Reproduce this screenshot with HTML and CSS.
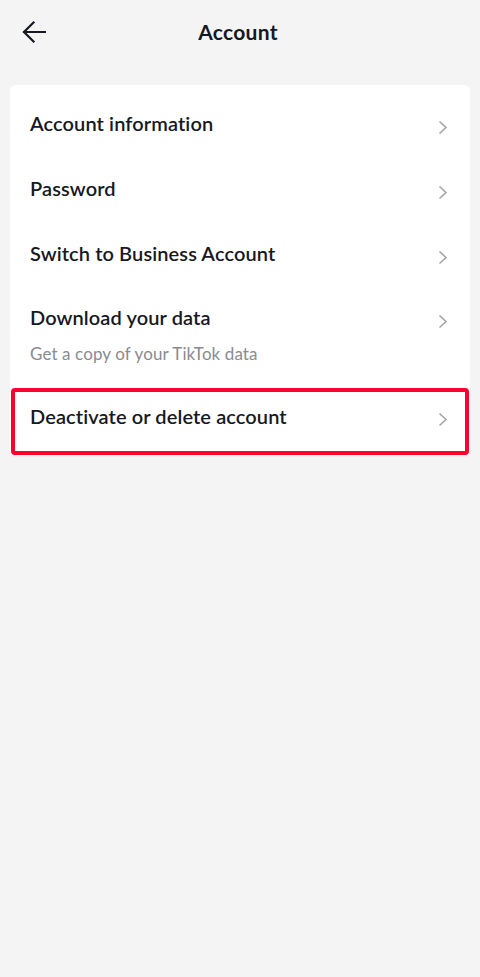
FILE: index.html
```html
<!DOCTYPE html>
<html>
<head>
<meta charset="utf-8">
<link rel="stylesheet" href="styles.css">
</head>
<body>
<header class="topbar">
  <svg class="back" width="24" height="24" viewBox="0 0 24 24"><path d="M23 12H2M11.5 2.5L2 12l9.5 9.5" fill="none" stroke="#161823" stroke-width="2.2" stroke-linecap="square"/></svg>
  <h1 class="title">Account</h1>
</header>
<main class="card">
  <div class="row">
    <span class="label">Account information</span>
    <svg class="chev" width="10" height="15" viewBox="0 0 10 15"><path d="M1.5 1.5L8 7.5l-6.5 6" fill="none" stroke="#a3a3a8" stroke-width="1.6"/></svg>
  </div>
  <div class="row">
    <span class="label">Password</span>
    <svg class="chev" width="10" height="15" viewBox="0 0 10 15"><path d="M1.5 1.5L8 7.5l-6.5 6" fill="none" stroke="#a3a3a8" stroke-width="1.6"/></svg>
  </div>
  <div class="row">
    <span class="label">Switch to Business Account</span>
    <svg class="chev" width="10" height="15" viewBox="0 0 10 15"><path d="M1.5 1.5L8 7.5l-6.5 6" fill="none" stroke="#a3a3a8" stroke-width="1.6"/></svg>
  </div>
  <div class="row row-sub">
    <div class="texts">
      <span class="label">Download your data</span>
      <span class="sub">Get a copy of your TikTok data</span>
    </div>
    <svg class="chev" width="10" height="15" viewBox="0 0 10 15"><path d="M1.5 1.5L8 7.5l-6.5 6" fill="none" stroke="#a3a3a8" stroke-width="1.6"/></svg>
  </div>
  <div class="row row-hl">
    <span class="label">Deactivate or delete account</span>
    <svg class="chev" width="10" height="15" viewBox="0 0 10 15"><path d="M1.5 1.5L8 7.5l-6.5 6" fill="none" stroke="#a3a3a8" stroke-width="1.6"/></svg>
  </div>
</main>
</body>
</html>
```
FILE: styles.css
```css
* { box-sizing: border-box; }
html, body { margin: 0; padding: 0; }
body {
  width: 480px;
  height: 977px;
  background: #f4f4f4;
  font-family: Lato, "Liberation Sans", sans-serif;
  color: #161823;
}
.topbar {
  height: 62px;
  display: flex;
  align-items: center;
  justify-content: center;
  position: relative;
}
.back {
  position: absolute;
  left: 22px;
  top: 20px;
}
.title {
  margin: 0 0 0 -4px;
  font-size: 21px;
  font-weight: 700;
  letter-spacing: 0.3px;
}
.card {
  margin: 23px 10px 0;
  background: #fff;
  border-radius: 6px;
  padding-top: 7px;
}
.row {
  height: 65px;
  display: flex;
  align-items: center;
  justify-content: space-between;
  padding: 0 22px 3px 20px;
}
.label {
  font-size: 20px;
  font-weight: 600;
  line-height: 24px;
  letter-spacing: 0.1px;
}
.chev { margin-top: 8px; }
.row-sub {
  height: 101px;
  align-items: flex-start;
  padding-top: 18px;
  padding-bottom: 0;
}
.row-sub .chev { margin-top: 9px; }
.texts { display: flex; flex-direction: column; }
.sub {
  margin-top: 14px;
  font-size: 17px;
  line-height: 22px;
  letter-spacing: 0.1px;
  color: #8a8b91;
}
.row-hl {
  height: 67px;
  margin: 0 1px;
  border: 4px solid #fe0030;
  border-radius: 4px;
  align-items: flex-start;
  padding: 12px 17px 0 15px;
}
.row-hl .chev { margin-top: 8px; }
```
